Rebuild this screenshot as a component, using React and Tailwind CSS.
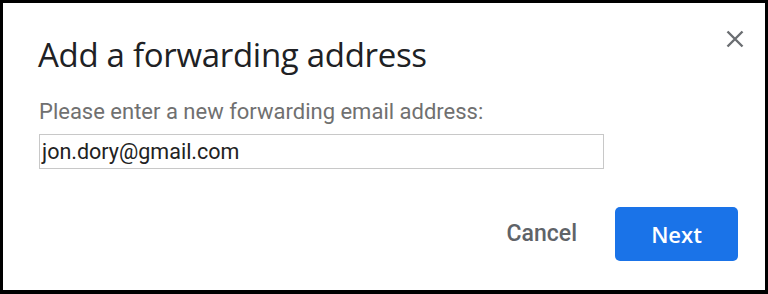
export default function App() {
  return (
    <div className="w-[768px] h-[294px] bg-black pt-[3px] pl-[3px] pr-[3px] pb-[4px]">
      <div className="relative w-full h-full bg-white flex flex-col">
        <button className="absolute left-[720px] top-[24px] w-[24px] h-[24px] flex items-center justify-center">
          <svg width="24" height="24" viewBox="0 0 24 24">
            <path d="M4.5 4.5 L19.5 19.5 M19.5 4.5 L4.5 19.5" stroke="#6b6e72" strokeWidth="2.4" strokeLinecap="butt" />
          </svg>
        </button>
        <h1 className="ml-[35px] mt-[30px] text-[33px] leading-[44px] text-[#202124] font-['Open_Sans',sans-serif] tracking-[-0.3px]">
          Add a forwarding address
        </h1>
        <p className="ml-[36px] mt-[22px] text-[22px] leading-[26px] text-[#707070] font-['Roboto',sans-serif]">
          Please enter a new forwarding email address:
        </p>
        <div className="ml-[36px] mt-[9px] w-[565px] h-[35px] border border-[#c8c8c8] flex items-center pl-[2px]">
          <span className="text-[21.5px] text-[#222] font-['Roboto',sans-serif] leading-none">jon.dory@gmail.com</span>
        </div>
        <div className="flex justify-end items-center mt-[38px] mr-[27px]">
          <span className="text-[23px] text-[#5f6368] font-['Roboto',sans-serif] font-medium mr-[38px]">Cancel</span>
          <button className="w-[123px] h-[54px] rounded-[5px] bg-[#1a73e8] text-white text-[22px] font-semibold font-['Open_Sans',sans-serif]">
            Next
          </button>
        </div>
      </div>
    </div>
  );
}
